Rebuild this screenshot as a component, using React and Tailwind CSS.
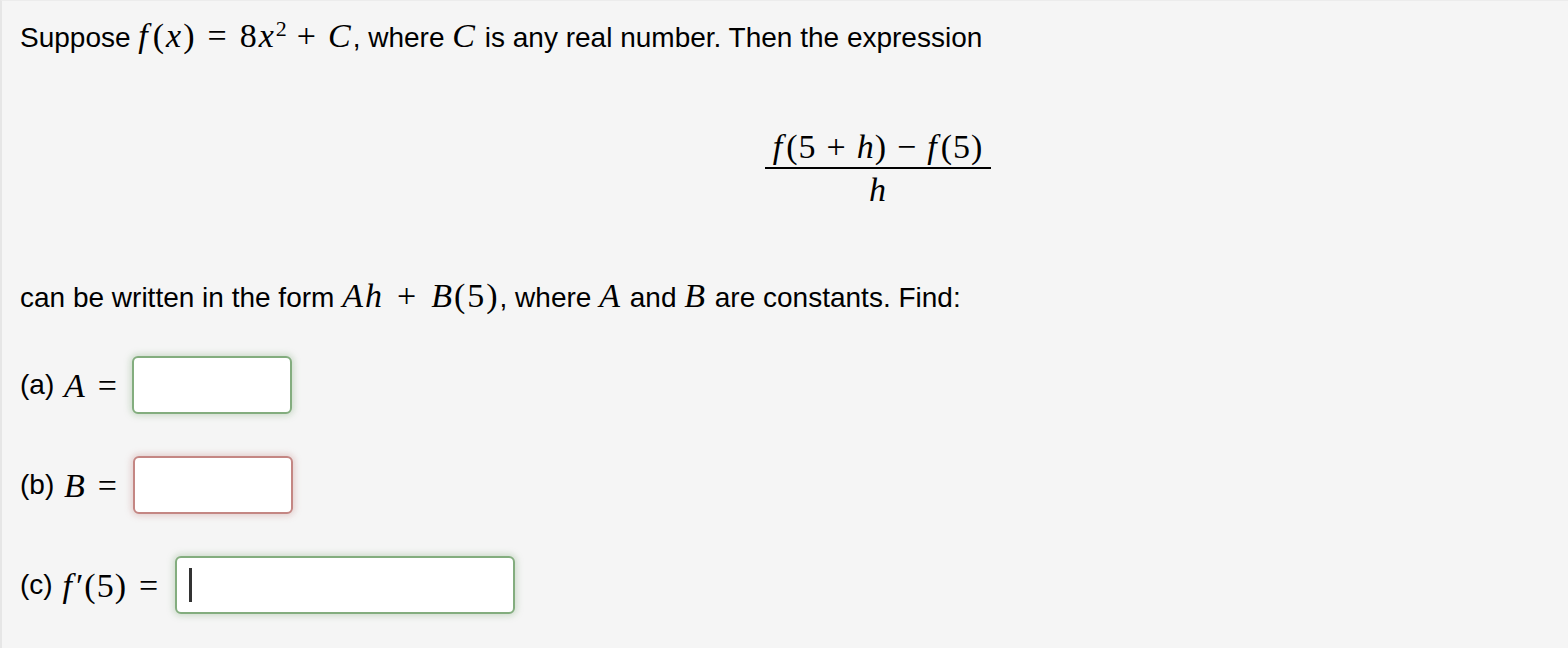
import React from "react";

const serif = { fontFamily: '"Liberation Serif", "Times New Roman", serif' };

const M = ({ children, className = "", tight = false }) => (
  <span className={"italic text-[34px] " + (tight ? "tracking-[1px] " : "tracking-[2px] ") + className} style={serif}>
    {children}
  </span>
);
const R = ({ children, className = "", tight = false }) => (
  <span className={"not-italic text-[34px] " + (tight ? "tracking-[1px] " : "tracking-[2px] ") + className} style={serif}>
    {children}
  </span>
);

export default function App() {
  return (
    <div
      className="w-[1568px] h-[648px] bg-[#f5f5f5] border-l-2 border-l-[#e6e6e6] border-t border-t-[#ececec] text-black text-[28px] overflow-hidden"
      style={{ fontFamily: '"Liberation Sans", Arial, sans-serif' }}
    >
      <div className="pl-[18px] pt-[16px]">
        <p className="h-[38px] leading-[38px] whitespace-nowrap">
          Suppose <M className="pr-[3px]">f</M><R>(</R><M>x</M><R>)</R><R className="mx-[11px]">=</R><R>8</R><M>x</M><sup className="text-[22px] not-italic" style={serif}>2</sup><R className="mx-[10px]">+</R><M>C</M>, where <M>C</M> is any real number. Then the expression
        </p>

        <div className="ml-[745px] mt-[73px] w-[226px] flex flex-col items-center">
          <div className="h-[38px] leading-[38px] whitespace-nowrap">
            <M tight className="pr-[3px]">f</M><R tight>(5</R><R tight className="mx-[10px]">+</R><M tight>h</M><R tight>)</R><R tight className="mx-[10px]">−</R><M tight className="pr-[3px]">f</M><R tight>(5)</R>
          </div>
          <div className="w-full h-[2px] bg-black mt-[1px]" />
          <div className="h-[38px] leading-[38px] mt-[2px]">
            <M tight>h</M>
          </div>
        </div>

        <p className="mt-[68px] h-[38px] leading-[38px] whitespace-nowrap">
          can be written in the form <M>Ah</M><R className="mx-[13px]">+</R><M>B</M><R>(5)</R>, where <M>A</M> and <M>B</M> are constants. Find:
        </p>

        <div className="mt-[41px] flex items-center h-[58px]">
          <span>(a)&nbsp;</span>
          <M tight className="ml-[2px]">A</M>
          <R tight className="ml-[12px]">=</R>
          <div className="ml-[14px] w-[160px] h-[58px] bg-white rounded-[6px] border-2 border-[#83ad7e] shadow-[0_0_6px_2px_rgba(131,173,126,0.35)]" />
        </div>

        <div className="mt-[42px] flex items-center h-[58px]">
          <span>(b)&nbsp;</span>
          <M tight className="ml-[2px]">B</M>
          <R tight className="ml-[12px]">=</R>
          <div className="ml-[15px] w-[160px] h-[58px] bg-white rounded-[6px] border-2 border-[#c48683] shadow-[0_0_6px_2px_rgba(196,134,131,0.35)]" />
        </div>

        <div className="mt-[42px] flex items-center h-[58px]">
          <span>(c)&nbsp;</span>
          <M tight className="ml-[2px] pr-[3px]">f</M>
          <R tight>′(5)</R>
          <R tight className="ml-[12px]">=</R>
          <div className="ml-[16px] w-[340px] h-[58px] bg-white rounded-[6px] border-2 border-[#83ad7e] shadow-[0_0_6px_2px_rgba(131,173,126,0.35)] flex items-center pl-[12px]">
            <div className="w-[3px] h-[34px] bg-[#333]" />
          </div>
        </div>
      </div>
    </div>
  );
}
